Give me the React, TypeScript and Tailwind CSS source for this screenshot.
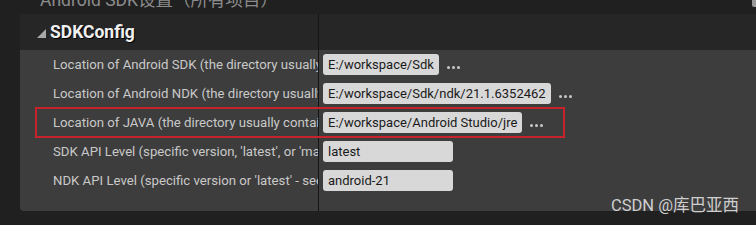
const rows = [
  { label: "Location of Android SDK (the directory usually contains 'android-sdk-')", value: "E:/workspace/Sdk", browse: true },
  { label: "Location of Android NDK (the directory usually contains 'android-ndk-')", value: "E:/workspace/Sdk/ndk/21.1.6352462", browse: true },
  { label: "Location of JAVA (the directory usually contains 'jdk')", value: "E:/workspace/Android Studio/jre", browse: true, highlight: true },
  { label: "SDK API Level (specific version, 'latest', or 'matchndk' - see tooltip)", value: "latest" },
  { label: "NDK API Level (specific version or 'latest' - see tooltip)", value: "android-21" },
]

function Dots() {
  return (
    <div className="ml-2 mt-[6px] flex gap-[2px]">
      <span className="h-[3px] w-[3px] rounded-full bg-[#c8c8c8]" />
      <span className="h-[3px] w-[3px] rounded-full bg-[#c8c8c8]" />
      <span className="h-[3px] w-[3px] rounded-full bg-[#c8c8c8]" />
    </div>
  )
}

export default function App() {
  return (
    <div
      className="relative h-[225px] w-[756px] overflow-hidden bg-[#202020]"
      style={{ fontFamily: "Roboto, 'Noto Sans CJK SC', sans-serif" }}
    >
      <div className="absolute right-0 top-0 h-[7px] w-[4px] rounded-bl-[2px] bg-[#9a9a9a]" />
      <div className="mt-[-10px] h-[24px] pl-[40px] text-[17.5px] leading-[20px] text-[#8c8c8c]">
        Android SDK设置（所有项目）
      </div>
      <div className="ml-[20px] flex rounded-bl-[4px]">
        <div className="w-[298px] shrink-0">
          <div className="flex h-[36px] items-center bg-[#262626] pl-[17px]">
            <svg width="9" height="9" viewBox="0 0 9 9" className="mt-[3px]">
              <polygon points="9,0 9,9 0,9" fill="#a8a8a8" />
            </svg>
            <span
              className="ml-[4px] text-[17.5px] font-bold text-[#f0f0f0]"
              style={{ textShadow: "1px 1px 0 #000" }}
            >
              SDKConfig
            </span>
          </div>
          <div className="rounded-bl-[4px] bg-[#3d3d3d] pb-[16px]">
            {rows.map((r) => (
              <div key={r.label} className="relative flex h-[29px] items-center overflow-hidden whitespace-nowrap pl-[33px] text-[13.2px] text-[#c9c9c9]">
                {r.label}
              </div>
            ))}
          </div>
        </div>
        <div className="w-px shrink-0 bg-[#151515]" />
        <div className="flex-1">
          <div className="h-[36px] bg-[#262626]" />
          <div className="bg-[#3d3d3d] pb-[16px]">
            {rows.map((r) => (
              <div key={r.value} className="flex h-[29px] items-center pl-[4px]">
                <div
                  className={
                    "flex h-[21px] items-center rounded-[3px] bg-[#d8d8d8] px-[5px] text-[13px] text-[#1a1a1a] " +
                    (r.browse ? "" : "w-[130px]")
                  }
                >
                  {r.value}
                </div>
                {r.browse && <Dots />}
              </div>
            ))}
          </div>
        </div>
      </div>
      <div className="pointer-events-none absolute left-[35px] top-[107px] h-[31px] w-[530px] border-2 border-[#c8232c]" />
      <div className="pointer-events-none absolute right-[17px] top-[194px] text-[16.5px] text-[#cfcfcf]">
        CSDN @库巴亚西
      </div>
    </div>
  )
}
